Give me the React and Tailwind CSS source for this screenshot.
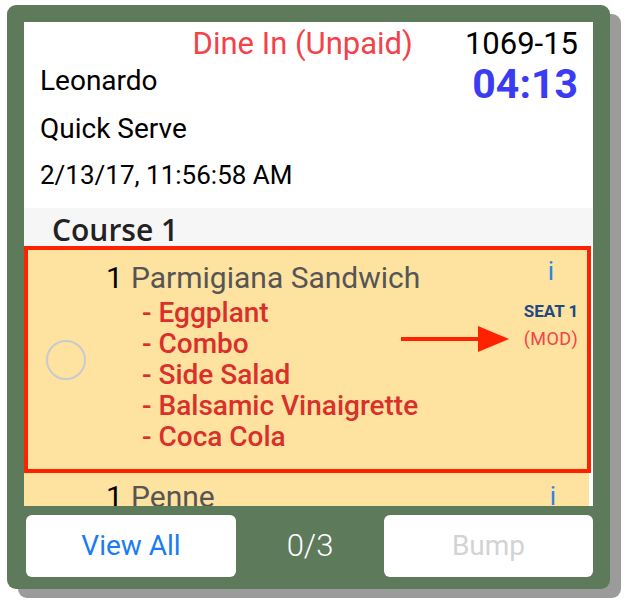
const din = { fontFamily: 'Roboto, "Liberation Sans", sans-serif' };

function Arrow() {
  return (
    <svg className="absolute left-[373px] top-[75px]" width="108" height="28" viewBox="0 0 108 28">
      <line x1="0" y1="14" x2="80" y2="14" stroke="#ff2200" strokeWidth="4" />
      <polygon points="77,1 108,14 77,27" fill="#ff2200" />
    </svg>
  );
}

export default function App() {
  const mods = ['Eggplant', 'Combo', 'Side Salad', 'Balsamic Vinaigrette', 'Coca Cola'];

  return (
    <div className="h-[600px] w-[627px] bg-white pl-[7px] pt-[5px]" style={din}>
      <div className="flex h-[584px] w-[603px] flex-col rounded-[9px] bg-[#5d7a5b] px-[17px] pt-[17px] shadow-[11px_9px_0_#9b9b9b]">
        <div className="relative h-[484px] overflow-hidden bg-white">
          {/* header */}
          <div className="pt-[6px]">
            <div className="flex h-[32px] items-center justify-end gap-[52px] pr-[15px] text-[31px] leading-[32px]">
              <span className="text-[#f2434a]">Dine In (Unpaid)</span>
              <span className="text-black">1069-15</span>
            </div>
            <div className="flex h-[42px] items-center justify-between pl-[16px] pr-[15px]">
              <span className="text-[28px] text-black">Leonardo</span>
              <span className="mt-[6px] text-[41px] font-bold leading-[34px] text-[#3b3bf2]">04:13</span>
            </div>
            <div className="flex h-[50px] items-center pl-[16px] pt-[3px] text-[28px] text-black">Quick Serve</div>
            <div className="flex h-[44px] items-center pl-[16px] pt-[3px] text-[26px] text-black">2/13/17, 11:56:58 AM</div>
            <div className="h-[12px]" />
          </div>

          {/* course */}
          <div
            className="flex h-[38px] items-center bg-[#f6f6f6] pl-[28px] pt-[6px] text-[30px] font-semibold leading-none text-[#222]"
            style={{ fontFamily: '"Open Sans", "Liberation Sans", sans-serif' }}
          >
            Course 1
          </div>

          {/* selected item */}
          <div className="relative mr-[2px] flex h-[227px] border-[4px] border-[#ff2200] bg-[#fee29f]">
            <div className="flex w-[78px] items-center">
              <div className="ml-[18px] h-[40px] w-[40px] rounded-full border-2 border-[#c6cad3]" />
            </div>
            <div className="flex-1 pt-[12px]">
              <div className="flex h-[31px] items-center text-[30px] leading-none">
                <span className="w-[25px] text-black">1</span>
                <span className="text-[#555]">Parmigiana Sandwich</span>
              </div>
              <div className="mt-[4px] pl-[36px] text-[28px] font-medium leading-[31px] text-[#d9302c]">
                {mods.map((m) => (
                  <div key={m}>- {m}</div>
                ))}
              </div>
            </div>
            <div className="flex w-[72px] flex-col items-center pt-[6px]">
              <span className="text-[26px] leading-[30px] text-[#2d83e6]">i</span>
              <span className="mt-[15px] text-[17px] font-bold leading-[20px] text-[#1b4b82]">SEAT 1</span>
              <span className="mt-[8px] text-[18px] leading-[20px] tracking-wide text-[#f2434a]">(MOD)</span>
            </div>
            <Arrow />
          </div>

          {/* next item */}
          <div className="mr-[4px] flex h-[40px] bg-[#fee29f] pl-[82px] pt-[8px]">
            <div className="flex flex-1 items-center text-[30px] leading-none">
              <span className="w-[25px] text-black">1</span>
              <span className="text-[#555]">Penne</span>
            </div>
            <span className="w-[72px] text-center text-[26px] leading-[30px] text-[#2d83e6]">i</span>
          </div>
        </div>

        {/* bottom bar */}
        <div className="flex items-start pl-[2px] pt-[9px]">
          <div className="flex h-[62px] w-[210px] items-center justify-center rounded-[6px] bg-white text-[28px] text-[#1a7cf5]">
            View All
          </div>
          <div className="flex h-[62px] flex-1 items-center justify-center text-[31px] font-light text-white">0/3</div>
          <div className="flex h-[62px] w-[209px] items-center justify-center rounded-[6px] bg-white text-[28px] text-[#d3d3d3]">
            Bump
          </div>
        </div>
      </div>
    </div>
  );
}
